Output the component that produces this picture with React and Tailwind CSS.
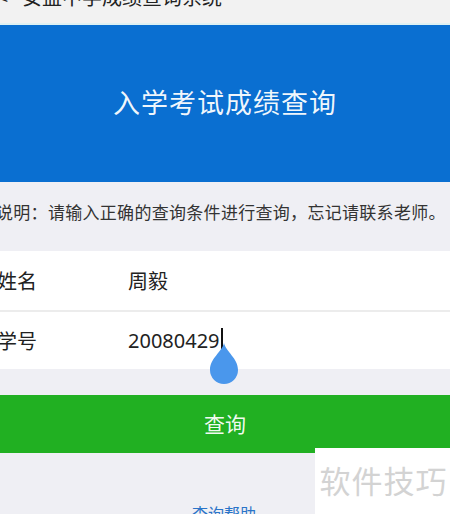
import React from "react";

const cjk = { fontFamily: '"Noto Sans CJK SC", "Noto Sans", sans-serif' };

function SelectionHandle() {
  return (
    <svg
      className="absolute left-[207px] top-[27px]"
      width="34"
      height="48"
      viewBox="0 0 34 48"
    >
      <path
        d="M17 4 C19 13 31 19 31 31 A14 14 0 1 1 3 31 C3 19 15 13 17 4 Z"
        fill="#4a97ec"
      />
    </svg>
  );
}

export default function App() {
  return (
    <div
      className="relative w-[450px] h-[514px] overflow-hidden bg-[#efeff4]"
      style={cjk}
    >
      {/* Navigation bar */}
      <div className="relative h-[23px] bg-[#f2f2f2] overflow-hidden">
        <div className="absolute left-[-2px] top-[-15px] flex items-center gap-[14px] text-[20px] leading-[24px] text-[#222]">
          <span className="text-[18px]">&lt;</span>
          <span>安益中学成绩查询系统</span>
        </div>
      </div>
      <div className="h-[2px] bg-[#dff1f3]" />

      {/* Header banner */}
      <div className="h-[157px] bg-[#0a6fd1] flex items-center justify-center">
        <span className="text-[27px] tracking-[1px] text-white/95 mt-[-3px]">
          入学考试成绩查询
        </span>
      </div>

      {/* Notice */}
      <div className="h-[69px] flex items-center ml-[-4px]">
        <span className="text-[17px] text-[#333] whitespace-nowrap tracking-[0.3px] mt-[-9px]">
          说明：请输入正确的查询条件进行查询，忘记请联系老师。
        </span>
      </div>

      {/* Form rows */}
      <div className="bg-white">
        <div className="h-[59px] flex items-center text-[20px] text-[#222]">
          <span className="w-[130px] ml-[-3px]">姓名</span>
          <span className="ml-[1px]">周毅</span>
        </div>
        <div className="h-[2px] bg-[#ececec]" />
        <div className="relative h-[57px] flex items-center text-[20px] text-[#222]">
          <span className="w-[130px] ml-[-3px]">学号</span>
          <span
            className="ml-[1px]"
            style={{ fontFamily: '"Noto Sans", "Noto Sans CJK SC", sans-serif' }}
          >
            20080429
          </span>
          <span className="ml-[1px] inline-block w-[2px] h-[28px] bg-[#111] mt-[2px]" />
          <SelectionHandle />
        </div>
      </div>

      <div className="h-[26px]" />

      {/* Submit button */}
      <div className="h-[58px] bg-[#21b022] flex items-center justify-center">
        <span className="text-[21px] text-white/95">查询</span>
      </div>

      {/* Help link */}
      <div className="relative h-[80px]">
        <span className="absolute left-[192px] top-[48px] text-[16px] text-[#2a74c8]">
          查询帮助
        </span>
      </div>

      {/* Watermark */}
      <div className="absolute left-[315px] top-[448px] w-[135px] h-[66px] bg-white flex items-center justify-center">
        <span className="text-[31px] text-[#d3d3d3] tracking-[1px] ml-[2px] mt-[-2px]">
          软件技巧
        </span>
      </div>
    </div>
  );
}
